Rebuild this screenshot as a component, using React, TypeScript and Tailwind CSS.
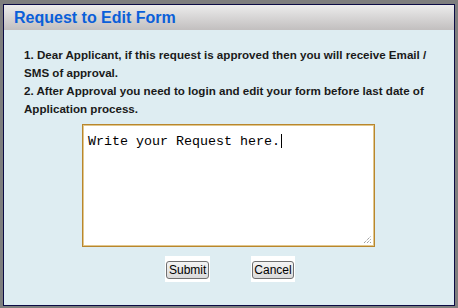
export default function App() {
  return (
    <div className="w-[458px] h-[308px] bg-[#7e7e7e] pl-[3px] pt-[4px] overflow-hidden font-['Liberation_Sans',Arial,sans-serif]">
      <div className="w-[452px] h-[302px] border border-[#0b0b45] bg-[#deedf2] flex flex-col">
        <div className="h-[25px] bg-gradient-to-b from-[#ececec] to-[#c2bfbf] flex items-center pl-[10px]">
          <h1 className="text-[16px] font-bold text-[#0b5fd9] leading-none">Request to Edit Form</h1>
        </div>
        <div className="flex flex-col pl-[20px] pr-[16px] pt-[16px]">
          <div className="text-[11.6px] font-bold leading-[18px] text-[#1a1a1a]">
            <p>1. Dear Applicant, if this request is approved then you will receive Email / SMS of approval.</p>
            <p>2. After Approval you need to login and edit your form before last date of Application process.</p>
          </div>
          <div className="ml-[58px] mt-[6px] relative w-[293px] h-[123px] bg-white border border-[#b8862e] shadow-[inset_0_0_0_1px_#e2c78c] pl-[5px] pt-[3px]">
            <span className="font-['Liberation_Mono','Courier_New',monospace] text-[13.33px] text-black leading-none">
              Write your Request here.
            </span>
            <span className="inline-block w-px h-[14px] bg-black align-[-3px] ml-[1px]" />
            <svg className="absolute right-[2px] bottom-[2px]" width="9" height="9" viewBox="0 0 9 9">
              <path d="M1 8 L8 1 M4 8 L8 4 M7 8 L8 7" stroke="#777" strokeWidth="1" strokeDasharray="1 1" />
            </svg>
          </div>
          <div className="flex ml-[141px] gap-[41px] mt-[9px]">
            <div className="bg-white p-px">
              <button className="h-[18px] px-[2px] rounded-[3px] border border-[#707070] bg-gradient-to-b from-[#f4f4f4] to-[#dadada] text-[12px] leading-none text-black">
                Submit
              </button>
            </div>
            <div className="bg-white p-px">
              <button className="h-[18px] px-[1px] rounded-[3px] border border-[#707070] bg-gradient-to-b from-[#f4f4f4] to-[#dadada] text-[12px] leading-none text-black">
                Cancel
              </button>
            </div>
          </div>
        </div>
      </div>
    </div>
  );
}
